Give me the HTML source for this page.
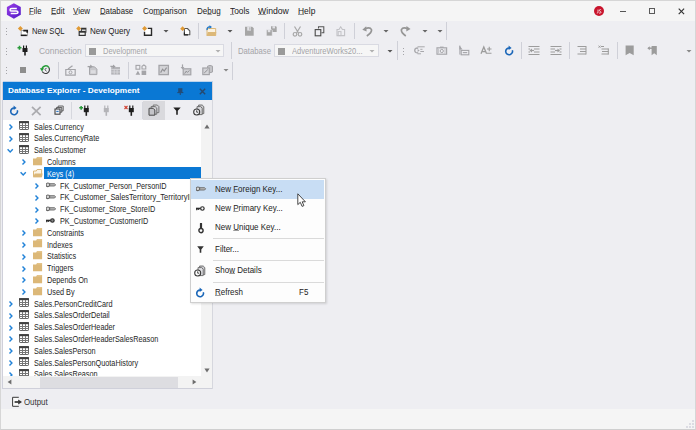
<!DOCTYPE html><html><head><meta charset="utf-8"><style>
*{margin:0;padding:0;box-sizing:border-box}
html,body{width:696px;height:430px;overflow:hidden;background:#eeeef2;font-family:"Liberation Sans",sans-serif;font-size:8px;color:#1e1e1e;position:relative}
.a{position:absolute}
.t{position:absolute;white-space:nowrap;line-height:10px}
u{text-decoration:underline;text-decoration-color:#9a9a9a;text-underline-offset:0px}
</style></head><body>
<div class="a" style="left:0;top:0;width:696px;height:430px;border:1px solid #d6d6d6;border-bottom-color:#cfcfcf"></div>
<div class="a" style="left:1px;top:1px;width:694px;height:20px;background:#f5f5f5"></div>
<svg class="a" style="left:6px;top:3px" width="16" height="16" viewBox="0 0 16 16"><defs><linearGradient id="lg" x1="0" y1="0" x2="1" y2="1"><stop offset="0" stop-color="#9a3de6"/><stop offset="1" stop-color="#4f1ac8"/></linearGradient></defs><polygon points="7.85,0.2 14.8,4.1 14.8,11.8 7.85,15.7 0.9,11.8 0.9,4.1" fill="url(#lg)"/><path d="M10.8,5.5 H5.8 Q4,5.5 4,6.9 Q4,8.1 5.8,8.1 H10.2 Q12,8.1 12,9.3 Q12,10.4 10.2,10.4 H4.7" stroke="#fff" stroke-width="1.5" fill="none"/></svg>
<div class="t" style="left:29.3px;top:6.98px;font-size:8.2px;line-height:9.159px;transform:scaleX(0.95);transform-origin:0 0;color:#222"><u>F</u>ile</div>
<div class="t" style="left:51.3px;top:6.98px;font-size:8.2px;line-height:9.159px;transform:scaleX(0.97);transform-origin:0 0;color:#222"><u>E</u>dit</div>
<div class="t" style="left:73.3px;top:6.98px;font-size:8.2px;line-height:9.159px;transform:scaleX(0.97);transform-origin:0 0;color:#222"><u>V</u>iew</div>
<div class="t" style="left:100.3px;top:6.98px;font-size:8.2px;line-height:9.159px;transform:scaleX(0.945);transform-origin:0 0;color:#222"><u>D</u>atabase</div>
<div class="t" style="left:143.3px;top:6.98px;font-size:8.2px;line-height:9.159px;transform:scaleX(0.99);transform-origin:0 0;color:#222">Co<u>m</u>parison</div>
<div class="t" style="left:197.3px;top:6.98px;font-size:8.2px;line-height:9.159px;transform:scaleX(0.98);transform-origin:0 0;color:#222">De<u>b</u>ug</div>
<div class="t" style="left:230.3px;top:6.98px;font-size:8.2px;line-height:9.159px;transform:scaleX(1.02);transform-origin:0 0;color:#222"><u>T</u>ools</div>
<div class="t" style="left:258.3px;top:6.98px;font-size:8.2px;line-height:9.159px;transform:scaleX(1.06);transform-origin:0 0;color:#222"><u>W</u>indow</div>
<div class="t" style="left:298.3px;top:6.98px;font-size:8.2px;line-height:9.159px;transform:scaleX(1.03);transform-origin:0 0;color:#222"><u>H</u>elp</div>
<div class="a" style="left:593.6px;top:5.9px;width:10.4px;height:10.4px;border-radius:50%;background:#c9142c"></div>
<svg class="a" style="left:596px;top:8.6px" width="6" height="5" viewBox="0 0 6 5"><path d="M2,0.5 V3.3 Q2,4.3 0.8,4.1 M5.2,0.9 Q4.6,0.4 3.8,0.6 Q3,0.9 3.4,1.8 Q4,2.3 4.7,2.7 Q5.3,3.4 4.6,4 Q3.8,4.4 3,3.9" stroke="#fff" stroke-width="0.75" fill="none"/></svg>
<div class="a" style="left:620px;top:11px;width:6px;height:1px;background:#555"></div>
<div class="a" style="left:649.3px;top:8.2px;width:6px;height:6px;border:1px solid #5a5a5a"></div>
<svg class="a" style="left:678px;top:8px" width="7" height="7" viewBox="0 0 7 7"><path d="M0.7,0.7 L6.1,6.1 M6.1,0.7 L0.7,6.1" stroke="#333" stroke-width="1.15"/></svg>
<div class="a" style="left:1px;top:21px;width:694px;height:61px;background:#eeeef2"></div>
<div class="a" style="left:6px;top:28px;width:1px;height:1px;background:#a4a4a8"></div><div class="a" style="left:6px;top:31px;width:1px;height:1px;background:#a4a4a8"></div><div class="a" style="left:6px;top:34px;width:1px;height:1px;background:#a4a4a8"></div>
<svg class="a" style="left:15px;top:24px" width="14" height="14" viewBox="0 0 14 14"><rect x="6.2" y="6.4" width="6.3" height="5.3" fill="#fff" stroke="#9a9a9a" stroke-width="0.9"/><path d="M5.8,11.3 H11.8" stroke="#1e1e1e" stroke-width="1.5"/><path d="M8.3,6.6 H12.2 V8.8" stroke="#1e1e1e" stroke-width="1.7" fill="none"/><polygon points="5.4,2.0999999999999996 7.9,4.6 5.4,7.1 2.9000000000000004,4.6" fill="#e09a35"/></svg>
<div class="t" style="left:31.6px;top:26.68px;font-size:8.2px;line-height:9.159px;transform:scaleX(0.93);transform-origin:0 0;color:#222">New SQL</div>
<svg class="a" style="left:74px;top:24px" width="14" height="14" viewBox="0 0 14 14"><rect x="7.5" y="4.2" width="4.5" height="4" fill="#fff" stroke="#555" stroke-width="1"/><rect x="7.5" y="4" width="4.5" height="1.6" fill="#333"/><rect x="5.2" y="7.4" width="6" height="4" fill="#f3f3f3" stroke="#333" stroke-width="1.2"/><rect x="5.2" y="7.2" width="6" height="1.5" fill="#333"/><polygon points="4.7,2.0999999999999996 7.2,4.6 4.7,7.1 2.2,4.6" fill="#e09a35"/></svg>
<div class="t" style="left:90.1px;top:26.68px;font-size:8.2px;line-height:9.159px;transform:scaleX(0.98);transform-origin:0 0;color:#222">New Query</div>
<svg class="a" style="left:140px;top:23px" width="16" height="16" viewBox="0 0 16 16"><rect x="4.5" y="5.4" width="7" height="6.8" fill="#fff"/><path d="M7.8,5.4 H11.5 V12.2 H4.5 V8.8" fill="none" stroke="#2a2a2a" stroke-width="1.4"/><polygon points="4.6,3.0999999999999996 7.1,5.6 4.6,8.1 2.0999999999999996,5.6" fill="#e09a35"/></svg>
<svg class="a" style="left:163px;top:29px" width="6" height="4" viewBox="0 0 6 4"><polygon points="0.5,1 5.5,1 3,3.6" fill="#555"/></svg>
<svg class="a" style="left:176px;top:23px" width="16" height="16" viewBox="0 0 16 16"><path d="M8.4,5.5 H11.4 L13.8,7.9 V11.8 H8.4 Z" fill="#fff" stroke="#555" stroke-width="1.1" stroke-linejoin="round"/><path d="M8.4,9.5 V11.8 H12" stroke="#222" stroke-width="1.2" fill="none"/><polygon points="6.6,3.3000000000000003 9.0,5.7 6.6,8.1 4.199999999999999,5.7" fill="#e09a35"/></svg>
<div class="a" style="left:198px;top:23px;width:1px;height:16px;background:#cfd0d8"></div>
<svg class="a" style="left:204px;top:24px" width="14" height="14" viewBox="0 0 14 14"><path d="M3,4.5 H11.7 V11.5 H3 Z" fill="#fbf2e0" stroke="#dcb878" stroke-width="1"/><path d="M2.5,12 L3.8,8 H12.3 L11.5,12 Z" fill="#dcb878"/><path d="M3.2,6 A2.3,2.3 0 0 1 6,3" stroke="#1b74c8" stroke-width="1.4" fill="none"/><polygon points="5.5,1.2 8,3 5.5,4.8" fill="#1b74c8"/></svg>
<svg class="a" style="left:227px;top:29px" width="6" height="4" viewBox="0 0 6 4"><polygon points="0.5,1 5.5,1 3,3.6" fill="#555"/></svg>
<svg class="a" style="left:244px;top:26px" width="10" height="10" viewBox="0 0 10 10"><path d="M1,0.7 H8.2 L9.7,2.2 V9.7 H1 Z" fill="#a6a6a6"/><rect x="3.2" y="0.7" width="3.8" height="3.9" fill="#e2e2e6"/><rect x="5.4" y="1.3" width="1" height="2.5" fill="#a6a6a6"/></svg>
<svg class="a" style="left:266px;top:26px" width="11" height="11" viewBox="0 0 11 11"><path d="M5,0.2 H10 L10.7,0.9 V5.9 H5 Z" fill="#a6a6a6"/><rect x="6.5" y="0.2" width="2.5" height="2.2" fill="#e2e2e6"/><path d="M0.3,3.7 H5.5 L6.3,4.5 V10 H0.3 Z" fill="#a6a6a6" stroke="#eeeef2" stroke-width="0.7"/><rect x="1.8" y="4" width="2.5" height="2.2" fill="#e2e2e6"/></svg>
<div class="a" style="left:284px;top:23px;width:1px;height:16px;background:#cfd0d8"></div>
<svg class="a" style="left:292px;top:26px" width="11" height="11" viewBox="0 0 11 11"><path d="M2.5,0.5 L6.5,7 M8.5,0.5 L4.5,7" stroke="#a8a8a8" stroke-width="1.2" fill="none"/><circle cx="3" cy="8.3" r="1.8" fill="none" stroke="#a8a8a8" stroke-width="1.2"/><circle cx="8" cy="8.3" r="1.8" fill="none" stroke="#a8a8a8" stroke-width="1.2"/></svg>
<svg class="a" style="left:314px;top:26px" width="11" height="11" viewBox="0 0 11 11"><path d="M4.5,2.5 V0.7 H9.8 V6.8 H7.5" fill="none" stroke="#555" stroke-width="1.05"/><rect x="1.2" y="3.6" width="5.6" height="6.2" fill="#eeeef2" stroke="#4a4a4a" stroke-width="1.1"/></svg>
<svg class="a" style="left:336px;top:26px" width="10" height="11" viewBox="0 0 10 11"><path d="M1,3.5 H3 L4.7,0.8 L6.4,3.5 H8.6 V9.6 H1 Z" fill="none" stroke="#c2c2c6" stroke-width="1.1"/><rect x="2.2" y="5.6" width="2.8" height="4" fill="none" stroke="#c2c2c6" stroke-width="1"/></svg>
<div class="a" style="left:354px;top:23px;width:1px;height:16px;background:#cfd0d8"></div>
<svg class="a" style="left:361px;top:25px" width="12" height="12" viewBox="0 0 12 12"><polygon points="1.3,4.8 5.2,1.3 5.6,6.4" fill="#959595"/><path d="M4,3.8 Q9,1.6 10.4,4.5 Q11.3,7.5 5.8,11" stroke="#959595" stroke-width="1.7" fill="none"/></svg>
<svg class="a" style="left:383px;top:29px" width="6" height="4" viewBox="0 0 6 4"><polygon points="0.5,1 5.5,1 3,3.6" fill="#666"/></svg>
<svg class="a" style="left:400px;top:25px" width="12" height="12" viewBox="0 0 12 12"><polygon points="10.5,4 6.5,1 6.3,6.5" fill="#959595"/><path d="M7.8,3.6 Q2.8,1.6 1.5,4.5 Q0.7,7.5 5.8,11" stroke="#959595" stroke-width="1.7" fill="none"/></svg>
<svg class="a" style="left:421.5px;top:29px" width="6" height="4" viewBox="0 0 6 4"><polygon points="0.5,1 5.5,1 3,3.6" fill="#666"/></svg>
<svg class="a" style="left:436.5px;top:29px" width="6" height="4" viewBox="0 0 6 4"><polygon points="0.5,1 5.5,1 3,3.6" fill="#666"/></svg>
<div class="a" style="left:446px;top:22px;width:1px;height:18px;background:#cfd0d8"></div>
<div class="a" style="left:6px;top:48px;width:1px;height:1px;background:#a4a4a8"></div><div class="a" style="left:6px;top:51px;width:1px;height:1px;background:#a4a4a8"></div><div class="a" style="left:6px;top:54px;width:1px;height:1px;background:#a4a4a8"></div>
<svg class="a" style="left:17px;top:45px" width="12" height="11" viewBox="0 0 12 11"><path d="M0.5,2.8 H4.5 M2.5,0.8 V4.8" stroke="#2a9a3a" stroke-width="1.6"/><rect x="5.5" y="3" width="5" height="4" fill="#1e1e1e"/><rect x="6" y="0.5" width="1.2" height="3" fill="#1e1e1e"/><rect x="8.8" y="0.5" width="1.2" height="3" fill="#1e1e1e"/><rect x="7.2" y="6.5" width="1.6" height="4" fill="#1e1e1e"/></svg>
<div class="t" style="left:39px;top:46.88px;font-size:8.2px;line-height:9.159px;transform:scaleX(1.03);transform-origin:0 0;color:#a4a4a8">Connection</div>
<div class="a" style="left:85px;top:44px;width:139px;height:13px;background:#f6f6f6;border:1px solid #d9dae2"></div>
<div class="a" style="left:89px;top:47.5px;width:7px;height:7px;background:#9a9a9a"></div>
<div class="t" style="left:102.6px;top:46.88px;font-size:8.2px;line-height:9.159px;transform:scaleX(0.91);transform-origin:0 0;color:#a4a4a8">Development</div>
<svg class="a" style="left:215px;top:49px" width="6" height="4" viewBox="0 0 6 4"><polygon points="0.5,1 5.5,1 3,3.6" fill="#b0b0b0"/></svg>
<div class="a" style="left:231px;top:42px;width:1px;height:17px;background:#cfd0d8"></div>
<div class="t" style="left:237.6px;top:46.88px;font-size:8.2px;line-height:9.159px;transform:scaleX(0.94);transform-origin:0 0;color:#a4a4a8">Database</div>
<div class="a" style="left:274px;top:44px;width:104.5px;height:13px;background:#f6f6f6;border:1px solid #d9dae2"></div>
<div class="a" style="left:278px;top:47.5px;width:7px;height:7px;background:#9a9a9a"></div>
<div class="t" style="left:291.5px;top:46.88px;font-size:8.2px;line-height:9.159px;transform:scaleX(0.925);transform-origin:0 0;color:#a4a4a8">AdventureWorks20...</div>
<svg class="a" style="left:369px;top:49px" width="6" height="4" viewBox="0 0 6 4"><polygon points="0.5,1 5.5,1 3,3.6" fill="#b0b0b0"/></svg>
<svg class="a" style="left:387px;top:49px" width="6" height="4" viewBox="0 0 6 4"><polygon points="0.5,1 5.5,1 3,3.6" fill="#555"/></svg>
<div class="a" style="left:397px;top:41px;width:1px;height:19px;background:#cfd0d8"></div>
<div class="a" style="left:403px;top:48px;width:1px;height:1px;background:#a4a4a8"></div><div class="a" style="left:403px;top:51px;width:1px;height:1px;background:#a4a4a8"></div><div class="a" style="left:403px;top:54px;width:1px;height:1px;background:#a4a4a8"></div>
<svg class="a" style="left:413px;top:45px" width="12" height="11" viewBox="0 0 12 11"><path d="M4.5,1.8 H11.7 M7.3,4.3 H9.5 M7.3,6.5 H11 M4.5,8.8 H8" stroke="#a8a8ac" stroke-width="1"/><path d="M5.2,3.3 A2.4,2.4 0 1 0 5.2,7.6" stroke="#a8a8ac" stroke-width="1.4" fill="none"/><polygon points="6.6,5.5 4.6,4 4.6,7" fill="#a8a8ac"/></svg>
<svg class="a" style="left:436px;top:45px" width="12" height="11" viewBox="0 0 12 11"><rect x="1" y="2.8" width="9.6" height="6.4" fill="none" stroke="#a8a8ac" stroke-width="1.2"/><path d="M2.6,3.5 V8.5 M9,3.5 V8.5" stroke="#b8b8bc" stroke-width="0.8"/><rect x="4" y="1.6" width="3.6" height="1.4" fill="#a8a8ac"/><circle cx="5.8" cy="6" r="1.6" fill="none" stroke="#a8a8ac" stroke-width="1"/></svg>
<svg class="a" style="left:459px;top:45px" width="11" height="11" viewBox="0 0 11 11"><polygon points="0.4,0.6 3.6,4.6 0.4,4.6" fill="#a4a4a8"/><path d="M0.9,0.6 V9.6" stroke="#a4a4a8" stroke-width="1"/><rect x="2.2" y="5.4" width="7.6" height="4.4" fill="none" stroke="#a4a4a8" stroke-width="1.1"/><path d="M3.8,7.6 H8.2" stroke="#a4a4a8" stroke-width="1.1"/></svg>
<svg class="a" style="left:480px;top:45px" width="13" height="11" viewBox="0 0 13 11"><path d="M1,8.8 L3.8,2 L6.6,8.8 M2.1,6.6 H5.5" stroke="#9c9c9c" stroke-width="1.3" fill="none"/><path d="M7,4 H11.5 M9.25,1.8 V6.2 M7,8.3 H11.5" stroke="#9c9c9c" stroke-width="1.1"/></svg>
<svg class="a" style="left:504px;top:45px" width="10" height="11" viewBox="0 0 10 11"><path d="M5.2,3 A3.4,3.4 0 1 0 8.3,5.2" stroke="#1a66b8" stroke-width="1.6" fill="none"/><polygon points="4.6,0.6 7.6,2.9 4.6,5.1" fill="#1a66b8"/></svg>
<div class="a" style="left:521px;top:42px;width:1px;height:17px;background:#cfd0d8"></div>
<svg class="a" style="left:528px;top:45px" width="12" height="11" viewBox="0 0 12 11"><path d="M0.5,1.5 H11.5 M0.5,9.5 H11.5 M6,4 H11.5 M6,7 H11.5 M0.5,4 H2 M0.5,7 H2" stroke="#9c9c9c" stroke-width="1.1"/><path d="M6,5.5 H2.5" stroke="#9c9c9c" stroke-width="1.2"/><polygon points="1.5,5.5 4,3.5 4,7.5" fill="#9c9c9c"/></svg>
<svg class="a" style="left:550px;top:45px" width="12" height="11" viewBox="0 0 12 11"><path d="M0.5,1.5 H11.5 M0.5,9.5 H11.5 M0.5,4 H5 M0.5,7 H5 M9.5,4 H11.5 M9.5,7 H11.5" stroke="#9c9c9c" stroke-width="1.1"/><path d="M5,5.5 H8.5" stroke="#9c9c9c" stroke-width="1.2"/><polygon points="10,5.5 7.5,3.5 7.5,7.5" fill="#9c9c9c"/></svg>
<div class="a" style="left:569px;top:42px;width:1px;height:17px;background:#cfd0d8"></div>
<svg class="a" style="left:577px;top:45px" width="10" height="11" viewBox="0 0 10 11"><path d="M0.5,1.5 H9 M3,4 H9 M3,6.5 H9 M0.5,9 H9" stroke="#9c9c9c" stroke-width="1.1"/><path d="M9,1 V9.5" stroke="#9c9c9c" stroke-width="1"/></svg>
<svg class="a" style="left:598px;top:45px" width="11" height="11" viewBox="0 0 11 11"><path d="M3.5,4 H10.5 M4,6.5 H10.5 M3.5,9 H10.5" stroke="#9c9c9c" stroke-width="1.1"/><path d="M10.3,3.5 V9.5" stroke="#9c9c9c" stroke-width="1"/><path d="M0.5,2.5 L2.5,0.8 M0.5,0.8 L2.5,2.5 M3,1.5 H6" stroke="#9c9c9c" stroke-width="1"/></svg>
<div class="a" style="left:617px;top:42px;width:1px;height:17px;background:#cfd0d8"></div>
<svg class="a" style="left:625px;top:45px" width="9" height="11" viewBox="0 0 9 11"><path d="M0.6,0.6 H8.7 V10.3 L4.65,8.1 L0.6,10.3 Z" fill="#9c9c9c"/></svg>
<svg class="a" style="left:647px;top:45px" width="11" height="11" viewBox="0 0 11 11"><path d="M4.6,1 H9.8 V10.2 L7.2,8.3 L4.6,10.2 Z" fill="#9c9c9c"/><path d="M1.2,3.2 H5.4" stroke="#9c9c9c" stroke-width="1.4"/><polygon points="0.3,3.2 2.8,1.2 2.8,5.2" fill="#9c9c9c"/></svg>
<svg class="a" style="left:685.5px;top:49px" width="6" height="4" viewBox="0 0 6 4"><polygon points="0.5,1 5.5,1 3,3.6" fill="#888"/></svg>
<div class="a" style="left:6px;top:67px;width:1px;height:1px;background:#a4a4a8"></div><div class="a" style="left:6px;top:70px;width:1px;height:1px;background:#a4a4a8"></div><div class="a" style="left:6px;top:73px;width:1px;height:1px;background:#a4a4a8"></div>
<div class="a" style="left:20px;top:67px;width:6px;height:6px;background:#8e8e8e"></div>
<svg class="a" style="left:39px;top:64px" width="12" height="12" viewBox="0 0 12 12"><path d="M9.9,3.6 A3.7,3.7 0 1 1 3.2,7.5" stroke="#3a3a3a" stroke-width="1.15" fill="none"/><path d="M3.1,5 A3.7,3.7 0 0 1 9.9,3.6" stroke="#229a35" stroke-width="1.5" fill="none"/><polygon points="0.9,4.2 5,4.2 3,7.6" fill="#229a35"/><path d="M7.5,3.9 L5.9,5.6 L7.5,7.2" stroke="#444" stroke-width="1" fill="none"/></svg>
<div class="a" style="left:58px;top:62px;width:1px;height:17px;background:#cfd0d8"></div>
<svg class="a" style="left:65px;top:65px" width="11" height="11" viewBox="0 0 11 11"><path d="M0.8,4.5 H10.2 V10.2 H0.8 Z" fill="none" stroke="#a4a4a8" stroke-width="1.2"/><path d="M3,4 L7.5,0.8" stroke="#a4a4a8" stroke-width="1.3"/><circle cx="5.5" cy="7.3" r="1.5" fill="none" stroke="#a4a4a8" stroke-width="1"/></svg>
<svg class="a" style="left:87px;top:64px" width="12" height="12" viewBox="0 0 12 12"><path d="M2.5,2.8 H7.5 L9.9,5.2 V10.6 H2.5 Z" fill="#c8c8cc" stroke="#a6a6aa" stroke-width="1"/><rect x="3.8" y="6.2" width="4.8" height="3.2" fill="#dcdce0"/><path d="M0.6,2.6 H3.6" stroke="#a0a0a4" stroke-width="1.3"/><polygon points="3.2,0.6 5.8,2.6 3.2,4.6" fill="#a0a0a4"/></svg>
<svg class="a" style="left:110px;top:64px" width="12" height="12" viewBox="0 0 12 12"><rect x="1.2" y="3" width="8.8" height="7.6" fill="#b4b4b8"/><path d="M1.2,5.6 H10 M1.2,8 H10 M4.2,5.6 V10.6 M7.1,5.6 V10.6" stroke="#dcdce0" stroke-width="0.8"/><path d="M0.4,2.4 H3.4" stroke="#a0a0a4" stroke-width="1.3"/><polygon points="3,0.4 5.6,2.4 3,4.4" fill="#a0a0a4"/></svg>
<div class="a" style="left:128px;top:62px;width:1px;height:17px;background:#cfd0d8"></div>
<svg class="a" style="left:135px;top:64px" width="12" height="12" viewBox="0 0 12 12"><rect x="1" y="1.4" width="3.8" height="3.8" fill="none" stroke="#a4a4a8" stroke-width="1.1"/><path d="M7,5 V2.4 L8.9,1 L10.8,2.4 V5 Z" fill="none" stroke="#a4a4a8" stroke-width="1.1"/><polygon points="0.6,10.8 2.9,6.8 5.2,10.8" fill="#a4a4a8"/><rect x="6.6" y="6.6" width="4.6" height="4.4" fill="#a4a4a8"/></svg>
<svg class="a" style="left:157.5px;top:64px" width="12" height="12" viewBox="0 0 12 12"><rect x="1" y="1.4" width="9.4" height="9.2" fill="#d4d4d8" stroke="#a4a4a8" stroke-width="1.3"/><path d="M2.6,8.6 L4.6,5.2 L6.2,7 L8.6,3.6" stroke="#909094" stroke-width="1.1" fill="none"/></svg>
<svg class="a" style="left:180px;top:64px" width="12" height="12" viewBox="0 0 12 12"><rect x="3.2" y="4.8" width="7.6" height="6" fill="#d0d0d4" stroke="#a4a4a8" stroke-width="1.2"/><path d="M4.6,9.6 L6.2,7.2 L7.4,8.4 L9.4,6.4" stroke="#909094" stroke-width="1" fill="none"/><path d="M2.5,0.4 V4.2" stroke="#a4a4a8" stroke-width="1.2"/><polygon points="0.6,3 4.4,3 2.5,5.6" fill="#a4a4a8"/></svg>
<svg class="a" style="left:202px;top:64px" width="12" height="12" viewBox="0 0 12 12"><path d="M5.5,2.2 Q8,0.6 10.5,2.2 V8 Q8,9.4 5.5,8 Z" fill="#c4c4c8" stroke="#a4a4a8" stroke-width="1"/><rect x="0.8" y="4" width="6.5" height="6.6" fill="#d4d4d8" stroke="#a4a4a8" stroke-width="1.2"/><path d="M2.2,9 L5.8,5.6" stroke="#909094" stroke-width="1"/></svg>
<svg class="a" style="left:222.5px;top:68px" width="6" height="4" viewBox="0 0 6 4"><polygon points="0.5,1 5.5,1 3,3.6" fill="#888"/></svg>
<div class="a" style="left:232px;top:62px;width:1px;height:18px;background:#cfd0d8"></div>
<div class="a" style="left:2px;top:82px;width:211px;height:307px;background:#fff;border:1px solid #cfd0da;border-top:none"></div>
<div class="a" style="left:3px;top:81px;width:209.5px;height:1px;background:rgba(10,120,212,0.22)"></div>
<div class="a" style="left:3px;top:82px;width:209px;height:18px;background:#0a78d4"></div>
<div class="t" style="left:8.1px;top:87.45px;font-size:7.9px;line-height:8.824px;transform:scaleX(1.045);transform-origin:0 0;color:#fff;font-weight:bold">Database Explorer - Development</div>
<svg class="a" style="left:177.3px;top:88px" width="7" height="8" viewBox="0 0 7 8"><rect x="1.2" y="0.2" width="4.2" height="4.3" fill="#234c78"/><rect x="0.3" y="4" width="6" height="1.1" fill="#234c78"/><path d="M3.3,5 V7" stroke="#234c78" stroke-width="1.1"/></svg>
<svg class="a" style="left:198.8px;top:88px" width="7" height="7" viewBox="0 0 7 7"><path d="M0.8,0.8 L6.2,6.2 M6.2,0.8 L0.8,6.2" stroke="#27486e" stroke-width="1.4"/></svg>
<div class="a" style="left:3px;top:100px;width:209px;height:20px;background:#eeeef2"></div>
<svg class="a" style="left:9px;top:105px" width="10" height="11" viewBox="0 0 10 11"><path d="M5.2,3 A3.4,3.4 0 1 0 8.3,5.2" stroke="#1a66b8" stroke-width="1.6" fill="none"/><polygon points="4.6,0.6 7.6,2.9 4.6,5.1" fill="#1a66b8"/></svg>
<svg class="a" style="left:30.5px;top:105.7px" width="11" height="10" viewBox="0 0 11 10"><path d="M1,0.8 L9.6,9.2 M9.6,0.8 L1,9.2" stroke="#ababaf" stroke-width="1.7"/></svg>
<svg class="a" style="left:54px;top:105px" width="10" height="10" viewBox="0 0 10 10"><path d="M4.2,2.6 V1 H9.2 V5.8 H7.4" fill="none" stroke="#666" stroke-width="1"/><path d="M2.6,4.5 V2.4 H7.8 V7.2 H6.2" fill="#eeeef2" stroke="#555" stroke-width="1"/><rect x="1" y="4" width="5" height="5.2" fill="#eeeef2" stroke="#444" stroke-width="1.1"/><path d="M2.3,6.4 H4.6" stroke="#1c6fc4" stroke-width="1"/></svg>
<div class="a" style="left:71px;top:102px;width:1px;height:17px;background:#d6d7de"></div>
<svg class="a" style="left:79px;top:105px" width="11" height="11" viewBox="0 0 11 11"><path d="M0.3,2.8 H4 M2.15,0.9 V4.7" stroke="#2a9a3a" stroke-width="1.5"/><rect x="4.8" y="3" width="5" height="4.2" fill="#1e1e1e"/><rect x="5.2" y="0.5" width="1.2" height="3" fill="#1e1e1e"/><rect x="8.2" y="0.5" width="1.2" height="3" fill="#1e1e1e"/><rect x="6.5" y="6.8" width="1.6" height="4" fill="#1e1e1e"/></svg>
<svg class="a" style="left:99px;top:105px" width="11" height="11" viewBox="0 0 11 11"><rect x="4.8" y="3" width="5" height="4.2" fill="#b4b4b8"/><rect x="5.2" y="0.5" width="1.2" height="3" fill="#b4b4b8"/><rect x="8.2" y="0.5" width="1.2" height="3" fill="#b4b4b8"/><rect x="6.5" y="6.8" width="1.6" height="4" fill="#b4b4b8"/></svg>
<svg class="a" style="left:123.5px;top:105px" width="11" height="11" viewBox="0 0 11 11"><path d="M0.5,1 L3.5,4 M3.5,1 L0.5,4" stroke="#d04030" stroke-width="1.1"/><rect x="4.8" y="3" width="5" height="4.2" fill="#1e1e1e"/><rect x="5.2" y="0.5" width="1.2" height="3" fill="#1e1e1e"/><rect x="8.2" y="0.5" width="1.2" height="3" fill="#1e1e1e"/><rect x="6.5" y="6.8" width="1.6" height="4" fill="#1e1e1e"/></svg>
<div class="a" style="left:142px;top:102px;width:1px;height:17px;background:#d6d7de"></div>
<div class="a" style="left:143px;top:100.5px;width:22.3px;height:19px;background:#d9d9dd"></div>
<svg class="a" style="left:148px;top:104px" width="12" height="12" viewBox="0 0 12 12"><path d="M5.2,1 H9.3 L10.9,2.6 V8.6 H5.2 Z" fill="#d2d2d6" stroke="#707070" stroke-width="0.9"/><path d="M3.1,2.6 H7.2 L8.8,4.2 V10.2 H3.1 Z" fill="#d2d2d6" stroke="#666" stroke-width="0.9"/><path d="M1,4.3 H5.1 L6.8,6 V11.2 H1 Z" fill="#c4c4c8" stroke="#4a4a4a" stroke-width="1"/></svg>
<svg class="a" style="left:172.5px;top:106.5px" width="8" height="8" viewBox="0 0 8 8"><path d="M0.3,0.5 H7.7 L4.8,3.8 V7.8 H3.2 V3.8 Z" fill="#222"/></svg>
<svg class="a" style="left:193px;top:104px" width="12" height="12" viewBox="0 0 12 12"><path d="M5.6,1 H9.2 L10.8,2.6 V9.6 H5.6 Z" fill="#c8c8cc" stroke="#666" stroke-width="0.9"/><path d="M4,2.6 H7.6 L9.2,4.2 V10.6 H4 Z" fill="#d8d8dc" stroke="#666" stroke-width="0.9"/><circle cx="3.7" cy="8" r="3" fill="#eeeef2" stroke="#3a3a3a" stroke-width="1.1"/><path d="M3.7,6.3 V8.2 H5.2" stroke="#333" stroke-width="0.9" fill="none"/></svg>
<div class="a" style="left:212px;top:100px;width:1px;height:289px;background:#d6d7de"></div>
<div class="a" style="left:3px;top:120px;width:198px;height:256px;overflow:hidden;background:#fff" id="tree">
<svg class="a" style="left:4.5px;top:3.9px" width="6" height="6" viewBox="0 0 6 6"><path d="M1.5,0.6 L3.9,3 L1.5,5.4" stroke="#2283d8" stroke-width="1.45" fill="none"/></svg>
<svg class="a" style="left:16px;top:1px" width="10" height="9" viewBox="0 0 10 9"><rect x="0.5" y="0.5" width="9" height="8" rx="0.6" fill="#fff" stroke="#666" stroke-width="1"/><rect x="0" y="0.2" width="10" height="2" fill="#404040"/><path d="M0.5,4.5 H9.5 M0.5,6.5 H9.5 M3.5,2 V8.5 M6.5,2 V8.5" stroke="#777" stroke-width="1"/></svg>
<div class="t" style="left:30.8px;top:2.68px;font-size:8.2px;line-height:9.159px;transform:scaleX(0.89);transform-origin:0 0;color:#1e1e1e">Sales.Currency</div>
<svg class="a" style="left:4.5px;top:15.7px" width="6" height="6" viewBox="0 0 6 6"><path d="M1.5,0.6 L3.9,3 L1.5,5.4" stroke="#2283d8" stroke-width="1.45" fill="none"/></svg>
<svg class="a" style="left:16px;top:13px" width="10" height="9" viewBox="0 0 10 9"><rect x="0.5" y="0.5" width="9" height="8" rx="0.6" fill="#fff" stroke="#666" stroke-width="1"/><rect x="0" y="0.2" width="10" height="2" fill="#404040"/><path d="M0.5,4.5 H9.5 M0.5,6.5 H9.5 M3.5,2 V8.5 M6.5,2 V8.5" stroke="#777" stroke-width="1"/></svg>
<div class="t" style="left:30.8px;top:14.48px;font-size:8.2px;line-height:9.159px;transform:scaleX(0.89);transform-origin:0 0;color:#1e1e1e">Sales.CurrencyRate</div>
<svg class="a" style="left:3.9px;top:27.5px" width="7" height="6" viewBox="0 0 7 6"><path d="M0.6,1.3 L3.2,3.9 L5.8,1.3" stroke="#2283d8" stroke-width="1.45" fill="none"/></svg>
<svg class="a" style="left:16px;top:25px" width="10" height="9" viewBox="0 0 10 9"><rect x="0.5" y="0.5" width="9" height="8" rx="0.6" fill="#fff" stroke="#666" stroke-width="1"/><rect x="0" y="0.2" width="10" height="2" fill="#404040"/><path d="M0.5,4.5 H9.5 M0.5,6.5 H9.5 M3.5,2 V8.5 M6.5,2 V8.5" stroke="#777" stroke-width="1"/></svg>
<div class="t" style="left:30.8px;top:26.28px;font-size:8.2px;line-height:9.159px;transform:scaleX(0.89);transform-origin:0 0;color:#1e1e1e">Sales.Customer</div>
<svg class="a" style="left:17.8px;top:39.3px" width="6" height="6" viewBox="0 0 6 6"><path d="M1.5,0.6 L3.9,3 L1.5,5.4" stroke="#2283d8" stroke-width="1.45" fill="none"/></svg>
<svg class="a" style="left:29.6px;top:36.7px" width="10" height="9" viewBox="0 0 10 9"><path d="M0,1.6 H3.2 L4,0 H9.1 V8.2 H0 Z" fill="#dcb878"/><rect x="4.2" y="0.2" width="4.7" height="1.2" fill="#e6c890"/></svg>
<div class="t" style="left:44.1px;top:38.08px;font-size:8.2px;line-height:9.159px;transform:scaleX(0.89);transform-origin:0 0;color:#1e1e1e">Columns</div>
<div class="a" style="left:41.2px;top:47.20px;width:156.5px;height:11.8px;background:#0a78d4"></div>
<svg class="a" style="left:17.2px;top:51.1px" width="7" height="6" viewBox="0 0 7 6"><path d="M0.6,1.3 L3.2,3.9 L5.8,1.3" stroke="#2283d8" stroke-width="1.45" fill="none"/></svg>
<svg class="a" style="left:29.6px;top:48.5px" width="10" height="9" viewBox="0 0 10 9"><path d="M0.5,2 H3.3 L4.1,0.5 H8.6 V7.7 H0.5 Z" fill="#fbf4e6" stroke="#dcb878" stroke-width="1"/><path d="M0,8.2 L1.8,4.4 H9.6 L8.9,8.2 Z" fill="#dcb878"/></svg>
<div class="t" style="left:44.1px;top:49.88px;font-size:8.2px;line-height:9.159px;transform:scaleX(0.89);transform-origin:0 0;color:#fff">Keys (4)</div>
<svg class="a" style="left:31.1px;top:62.9px" width="6" height="6" viewBox="0 0 6 6"><path d="M1.5,0.6 L3.9,3 L1.5,5.4" stroke="#2283d8" stroke-width="1.45" fill="none"/></svg>
<svg class="a" style="left:42.9px;top:62.3px" width="10" height="6" viewBox="0 0 10 6"><path d="M3.6,1.7 H8.6 L9.6,2.85 L8.6,4 H3.6 Z" fill="#b8b8b8" stroke="#6a6a6a" stroke-width="0.9"/><circle cx="1.9" cy="2.85" r="1.8" fill="#d8d8d8" stroke="#666" stroke-width="1.1"/></svg>
<div class="t" style="left:57.4px;top:61.68px;font-size:8.2px;line-height:9.159px;transform:scaleX(0.89);transform-origin:0 0;color:#1e1e1e">FK_Customer_Person_PersonID</div>
<svg class="a" style="left:31.1px;top:74.7px" width="6" height="6" viewBox="0 0 6 6"><path d="M1.5,0.6 L3.9,3 L1.5,5.4" stroke="#2283d8" stroke-width="1.45" fill="none"/></svg>
<svg class="a" style="left:42.9px;top:74.1px" width="10" height="6" viewBox="0 0 10 6"><path d="M3.6,1.7 H8.6 L9.6,2.85 L8.6,4 H3.6 Z" fill="#b8b8b8" stroke="#6a6a6a" stroke-width="0.9"/><circle cx="1.9" cy="2.85" r="1.8" fill="#d8d8d8" stroke="#666" stroke-width="1.1"/></svg>
<div class="t" style="left:57.4px;top:73.48px;font-size:8.2px;line-height:9.159px;transform:scaleX(0.915);transform-origin:0 0;color:#1e1e1e">FK_Customer_SalesTerritory_TerritoryID</div>
<svg class="a" style="left:31.1px;top:86.5px" width="6" height="6" viewBox="0 0 6 6"><path d="M1.5,0.6 L3.9,3 L1.5,5.4" stroke="#2283d8" stroke-width="1.45" fill="none"/></svg>
<svg class="a" style="left:42.9px;top:85.9px" width="10" height="6" viewBox="0 0 10 6"><path d="M3.6,1.7 H8.6 L9.6,2.85 L8.6,4 H3.6 Z" fill="#b8b8b8" stroke="#6a6a6a" stroke-width="0.9"/><circle cx="1.9" cy="2.85" r="1.8" fill="#d8d8d8" stroke="#666" stroke-width="1.1"/></svg>
<div class="t" style="left:57.4px;top:85.28px;font-size:8.2px;line-height:9.159px;transform:scaleX(0.89);transform-origin:0 0;color:#1e1e1e">FK_Customer_Store_StoreID</div>
<svg class="a" style="left:31.1px;top:98.3px" width="6" height="6" viewBox="0 0 6 6"><path d="M1.5,0.6 L3.9,3 L1.5,5.4" stroke="#2283d8" stroke-width="1.45" fill="none"/></svg>
<svg class="a" style="left:42.9px;top:97.7px" width="10" height="6" viewBox="0 0 10 6"><path d="M0,2.5 H4.6" stroke="#2e2e2e" stroke-width="1.6"/><path d="M0.7,2.6 V4.2 M2.3,2.6 V4" stroke="#2e2e2e" stroke-width="1.1"/><circle cx="6.4" cy="2.5" r="1.75" fill="#888" stroke="#2e2e2e" stroke-width="1.2"/></svg>
<div class="t" style="left:57.4px;top:97.08px;font-size:8.2px;line-height:9.159px;transform:scaleX(0.89);transform-origin:0 0;color:#1e1e1e">PK_Customer_CustomerID</div>
<svg class="a" style="left:17.8px;top:110.1px" width="6" height="6" viewBox="0 0 6 6"><path d="M1.5,0.6 L3.9,3 L1.5,5.4" stroke="#2283d8" stroke-width="1.45" fill="none"/></svg>
<svg class="a" style="left:29.6px;top:107.5px" width="10" height="9" viewBox="0 0 10 9"><path d="M0,1.6 H3.2 L4,0 H9.1 V8.2 H0 Z" fill="#dcb878"/><rect x="4.2" y="0.2" width="4.7" height="1.2" fill="#e6c890"/></svg>
<div class="t" style="left:44.1px;top:108.88px;font-size:8.2px;line-height:9.159px;transform:scaleX(0.89);transform-origin:0 0;color:#1e1e1e">Constraints</div>
<svg class="a" style="left:17.8px;top:121.9px" width="6" height="6" viewBox="0 0 6 6"><path d="M1.5,0.6 L3.9,3 L1.5,5.4" stroke="#2283d8" stroke-width="1.45" fill="none"/></svg>
<svg class="a" style="left:29.6px;top:119.3px" width="10" height="9" viewBox="0 0 10 9"><path d="M0,1.6 H3.2 L4,0 H9.1 V8.2 H0 Z" fill="#dcb878"/><rect x="4.2" y="0.2" width="4.7" height="1.2" fill="#e6c890"/></svg>
<div class="t" style="left:44.1px;top:120.68px;font-size:8.2px;line-height:9.159px;transform:scaleX(0.89);transform-origin:0 0;color:#1e1e1e">Indexes</div>
<svg class="a" style="left:17.8px;top:133.7px" width="6" height="6" viewBox="0 0 6 6"><path d="M1.5,0.6 L3.9,3 L1.5,5.4" stroke="#2283d8" stroke-width="1.45" fill="none"/></svg>
<svg class="a" style="left:29.6px;top:131.1px" width="10" height="9" viewBox="0 0 10 9"><path d="M0,1.6 H3.2 L4,0 H9.1 V8.2 H0 Z" fill="#dcb878"/><rect x="4.2" y="0.2" width="4.7" height="1.2" fill="#e6c890"/></svg>
<div class="t" style="left:44.1px;top:132.48px;font-size:8.2px;line-height:9.159px;transform:scaleX(0.89);transform-origin:0 0;color:#1e1e1e">Statistics</div>
<svg class="a" style="left:17.8px;top:145.5px" width="6" height="6" viewBox="0 0 6 6"><path d="M1.5,0.6 L3.9,3 L1.5,5.4" stroke="#2283d8" stroke-width="1.45" fill="none"/></svg>
<svg class="a" style="left:29.6px;top:142.9px" width="10" height="9" viewBox="0 0 10 9"><path d="M0,1.6 H3.2 L4,0 H9.1 V8.2 H0 Z" fill="#dcb878"/><rect x="4.2" y="0.2" width="4.7" height="1.2" fill="#e6c890"/></svg>
<div class="t" style="left:44.1px;top:144.28px;font-size:8.2px;line-height:9.159px;transform:scaleX(0.89);transform-origin:0 0;color:#1e1e1e">Triggers</div>
<svg class="a" style="left:17.8px;top:157.3px" width="6" height="6" viewBox="0 0 6 6"><path d="M1.5,0.6 L3.9,3 L1.5,5.4" stroke="#2283d8" stroke-width="1.45" fill="none"/></svg>
<svg class="a" style="left:29.6px;top:154.7px" width="10" height="9" viewBox="0 0 10 9"><path d="M0,1.6 H3.2 L4,0 H9.1 V8.2 H0 Z" fill="#dcb878"/><rect x="4.2" y="0.2" width="4.7" height="1.2" fill="#e6c890"/></svg>
<div class="t" style="left:44.1px;top:156.08px;font-size:8.2px;line-height:9.159px;transform:scaleX(0.89);transform-origin:0 0;color:#1e1e1e">Depends On</div>
<svg class="a" style="left:17.8px;top:169.1px" width="6" height="6" viewBox="0 0 6 6"><path d="M1.5,0.6 L3.9,3 L1.5,5.4" stroke="#2283d8" stroke-width="1.45" fill="none"/></svg>
<svg class="a" style="left:29.6px;top:166.5px" width="10" height="9" viewBox="0 0 10 9"><path d="M0,1.6 H3.2 L4,0 H9.1 V8.2 H0 Z" fill="#dcb878"/><rect x="4.2" y="0.2" width="4.7" height="1.2" fill="#e6c890"/></svg>
<div class="t" style="left:44.1px;top:167.88px;font-size:8.2px;line-height:9.159px;transform:scaleX(0.89);transform-origin:0 0;color:#1e1e1e">Used By</div>
<svg class="a" style="left:4.5px;top:180.9px" width="6" height="6" viewBox="0 0 6 6"><path d="M1.5,0.6 L3.9,3 L1.5,5.4" stroke="#2283d8" stroke-width="1.45" fill="none"/></svg>
<svg class="a" style="left:16px;top:178px" width="10" height="9" viewBox="0 0 10 9"><rect x="0.5" y="0.5" width="9" height="8" rx="0.6" fill="#fff" stroke="#666" stroke-width="1"/><rect x="0" y="0.2" width="10" height="2" fill="#404040"/><path d="M0.5,4.5 H9.5 M0.5,6.5 H9.5 M3.5,2 V8.5 M6.5,2 V8.5" stroke="#777" stroke-width="1"/></svg>
<div class="t" style="left:30.8px;top:179.68px;font-size:8.2px;line-height:9.159px;transform:scaleX(0.89);transform-origin:0 0;color:#1e1e1e">Sales.PersonCreditCard</div>
<svg class="a" style="left:4.5px;top:192.7px" width="6" height="6" viewBox="0 0 6 6"><path d="M1.5,0.6 L3.9,3 L1.5,5.4" stroke="#2283d8" stroke-width="1.45" fill="none"/></svg>
<svg class="a" style="left:16px;top:190px" width="10" height="9" viewBox="0 0 10 9"><rect x="0.5" y="0.5" width="9" height="8" rx="0.6" fill="#fff" stroke="#666" stroke-width="1"/><rect x="0" y="0.2" width="10" height="2" fill="#404040"/><path d="M0.5,4.5 H9.5 M0.5,6.5 H9.5 M3.5,2 V8.5 M6.5,2 V8.5" stroke="#777" stroke-width="1"/></svg>
<div class="t" style="left:30.8px;top:191.48px;font-size:8.2px;line-height:9.159px;transform:scaleX(0.89);transform-origin:0 0;color:#1e1e1e">Sales.SalesOrderDetail</div>
<svg class="a" style="left:4.5px;top:204.5px" width="6" height="6" viewBox="0 0 6 6"><path d="M1.5,0.6 L3.9,3 L1.5,5.4" stroke="#2283d8" stroke-width="1.45" fill="none"/></svg>
<svg class="a" style="left:16px;top:202px" width="10" height="9" viewBox="0 0 10 9"><rect x="0.5" y="0.5" width="9" height="8" rx="0.6" fill="#fff" stroke="#666" stroke-width="1"/><rect x="0" y="0.2" width="10" height="2" fill="#404040"/><path d="M0.5,4.5 H9.5 M0.5,6.5 H9.5 M3.5,2 V8.5 M6.5,2 V8.5" stroke="#777" stroke-width="1"/></svg>
<div class="t" style="left:30.8px;top:203.28px;font-size:8.2px;line-height:9.159px;transform:scaleX(0.89);transform-origin:0 0;color:#1e1e1e">Sales.SalesOrderHeader</div>
<svg class="a" style="left:4.5px;top:216.3px" width="6" height="6" viewBox="0 0 6 6"><path d="M1.5,0.6 L3.9,3 L1.5,5.4" stroke="#2283d8" stroke-width="1.45" fill="none"/></svg>
<svg class="a" style="left:16px;top:214px" width="10" height="9" viewBox="0 0 10 9"><rect x="0.5" y="0.5" width="9" height="8" rx="0.6" fill="#fff" stroke="#666" stroke-width="1"/><rect x="0" y="0.2" width="10" height="2" fill="#404040"/><path d="M0.5,4.5 H9.5 M0.5,6.5 H9.5 M3.5,2 V8.5 M6.5,2 V8.5" stroke="#777" stroke-width="1"/></svg>
<div class="t" style="left:30.8px;top:215.08px;font-size:8.2px;line-height:9.159px;transform:scaleX(0.89);transform-origin:0 0;color:#1e1e1e">Sales.SalesOrderHeaderSalesReason</div>
<svg class="a" style="left:4.5px;top:228.1px" width="6" height="6" viewBox="0 0 6 6"><path d="M1.5,0.6 L3.9,3 L1.5,5.4" stroke="#2283d8" stroke-width="1.45" fill="none"/></svg>
<svg class="a" style="left:16px;top:226px" width="10" height="9" viewBox="0 0 10 9"><rect x="0.5" y="0.5" width="9" height="8" rx="0.6" fill="#fff" stroke="#666" stroke-width="1"/><rect x="0" y="0.2" width="10" height="2" fill="#404040"/><path d="M0.5,4.5 H9.5 M0.5,6.5 H9.5 M3.5,2 V8.5 M6.5,2 V8.5" stroke="#777" stroke-width="1"/></svg>
<div class="t" style="left:30.8px;top:226.88px;font-size:8.2px;line-height:9.159px;transform:scaleX(0.89);transform-origin:0 0;color:#1e1e1e">Sales.SalesPerson</div>
<svg class="a" style="left:4.5px;top:239.9px" width="6" height="6" viewBox="0 0 6 6"><path d="M1.5,0.6 L3.9,3 L1.5,5.4" stroke="#2283d8" stroke-width="1.45" fill="none"/></svg>
<svg class="a" style="left:16px;top:237px" width="10" height="9" viewBox="0 0 10 9"><rect x="0.5" y="0.5" width="9" height="8" rx="0.6" fill="#fff" stroke="#666" stroke-width="1"/><rect x="0" y="0.2" width="10" height="2" fill="#404040"/><path d="M0.5,4.5 H9.5 M0.5,6.5 H9.5 M3.5,2 V8.5 M6.5,2 V8.5" stroke="#777" stroke-width="1"/></svg>
<div class="t" style="left:30.8px;top:238.68px;font-size:8.2px;line-height:9.159px;transform:scaleX(0.89);transform-origin:0 0;color:#1e1e1e">Sales.SalesPersonQuotaHistory</div>
<svg class="a" style="left:4.5px;top:251.7px" width="6" height="6" viewBox="0 0 6 6"><path d="M1.5,0.6 L3.9,3 L1.5,5.4" stroke="#2283d8" stroke-width="1.45" fill="none"/></svg>
<svg class="a" style="left:16px;top:249px" width="10" height="9" viewBox="0 0 10 9"><rect x="0.5" y="0.5" width="9" height="8" rx="0.6" fill="#fff" stroke="#666" stroke-width="1"/><rect x="0" y="0.2" width="10" height="2" fill="#404040"/><path d="M0.5,4.5 H9.5 M0.5,6.5 H9.5 M3.5,2 V8.5 M6.5,2 V8.5" stroke="#777" stroke-width="1"/></svg>
<div class="t" style="left:30.8px;top:250.48px;font-size:8.2px;line-height:9.159px;transform:scaleX(0.89);transform-origin:0 0;color:#1e1e1e">Sales.SalesReason</div>
</div>
<div class="a" style="left:201px;top:120px;width:11px;height:268px;background:#f3f3f3"></div>
<svg class="a" style="left:203.5px;top:123.5px" width="6" height="5" viewBox="0 0 6 5"><polygon points="0.4,4.4 5.6,4.4 3,0.6" fill="#6e6e6e"/></svg>
<svg class="a" style="left:203.5px;top:367.8px" width="6" height="5" viewBox="0 0 6 5"><polygon points="0.4,0.6 5.6,0.6 3,4.4" fill="#6e6e6e"/></svg>
<div class="a" style="left:3px;top:376px;width:198px;height:12px;background:#f3f3f3"></div>
<div class="a" style="left:40px;top:376.5px;width:138px;height:11px;background:#dddde1"></div>
<svg class="a" style="left:6.8px;top:379.4px" width="5" height="6" viewBox="0 0 5 6"><polygon points="4.4,0.4 4.4,5.6 0.6,3" fill="#6e6e6e"/></svg>
<svg class="a" style="left:192.3px;top:379.4px" width="5" height="6" viewBox="0 0 5 6"><polygon points="0.6,0.4 0.6,5.6 4.4,3" fill="#6e6e6e"/></svg>
<svg class="a" style="left:11px;top:396px" width="12" height="12" viewBox="0 0 12 12"><rect x="1.6" y="1.3" width="6" height="9" fill="#fafafa"/><path d="M7.8,1.3 H1.6 V10.3 H7.8" stroke="#3a3a3a" stroke-width="1" fill="none"/><path d="M3.6,6 H7.8" stroke="#333" stroke-width="1.7"/><polygon points="7.2,3.6 11,6 7.2,8.4" fill="#333"/></svg>
<div class="t" style="left:24px;top:398.28px;font-size:8.2px;line-height:9.159px;transform:scaleX(0.96);transform-origin:0 0;color:#333">Output</div>
<div class="a" style="left:1px;top:409.3px;width:694px;height:19.7px;background:#f5f5f5"></div>
<div class="a" style="left:692px;top:420px;width:2px;height:2px;background:#dcdce3"></div>
<div class="a" style="left:689px;top:423px;width:2px;height:2px;background:#dcdce3"></div>
<div class="a" style="left:692px;top:423px;width:2px;height:2px;background:#dcdce3"></div>
<div class="a" style="left:686px;top:426px;width:2px;height:2px;background:#dcdce3"></div>
<div class="a" style="left:689px;top:426px;width:2px;height:2px;background:#dcdce3"></div>
<div class="a" style="left:692px;top:426px;width:2px;height:2px;background:#dcdce3"></div>
<div class="a" style="left:189.5px;top:177.5px;width:136px;height:125px;background:#fdfdfd;border:1px solid #cfcfcf;box-shadow:1px 1px 2px rgba(0,0,0,0.13)"></div>
<div class="a" style="left:191px;top:179.6px;width:133px;height:19px;background:#c8ddf4"></div>
<div class="a" style="left:212.5px;top:238px;width:111px;height:1px;background:#dadada"></div>
<div class="a" style="left:212.5px;top:260px;width:111px;height:1px;background:#dadada"></div>
<div class="a" style="left:212.5px;top:281.5px;width:111px;height:1px;background:#dadada"></div>
<svg class="a" style="left:195.6px;top:186.4px" width="11" height="6" viewBox="0 0 11 6"><path d="M3.6,1.7 H8.6 L9.6,2.85 L8.6,4 H3.6 Z" fill="#b8b8b8" stroke="#6a6a6a" stroke-width="0.9"/><circle cx="1.9" cy="2.85" r="1.8" fill="#d8d8d8" stroke="#666" stroke-width="1.1"/></svg>
<div class="t" style="left:215.1px;top:184.62px;font-size:8.6px;line-height:9.606px;transform:scaleX(0.93);transform-origin:0 0;color:#222">New <u>F</u>oreign Key...</div>
<svg class="a" style="left:196px;top:205.5px" width="10" height="6" viewBox="0 0 10 6"><path d="M0,2.5 H4.6" stroke="#2e2e2e" stroke-width="1.6"/><path d="M0.7,2.6 V4.2 M2.3,2.6 V4" stroke="#2e2e2e" stroke-width="1.1"/><circle cx="6.4" cy="2.5" r="1.75" fill="#fbfbfb" stroke="#2e2e2e" stroke-width="1.2"/></svg>
<div class="t" style="left:215.1px;top:203.92px;font-size:8.6px;line-height:9.606px;transform:scaleX(0.93);transform-origin:0 0;color:#222">New <u>P</u>rimary Key...</div>
<svg class="a" style="left:197.5px;top:222.5px" width="6" height="11" viewBox="0 0 6 11"><path d="M3,0.8 V5.6" stroke="#333" stroke-width="2.2" stroke-linecap="round"/><circle cx="3" cy="7.6" r="2.1" fill="#fbfbfb" stroke="#333" stroke-width="1.4"/></svg>
<div class="t" style="left:215.1px;top:223.02px;font-size:8.6px;line-height:9.606px;transform:scaleX(0.93);transform-origin:0 0;color:#222">New <u>U</u>nique Key...</div>
<svg class="a" style="left:196.5px;top:246px" width="7" height="7" viewBox="0 0 7 7"><path d="M0.2,0.3 H6.8 L4.3,3.4 V6.8 H2.7 V3.4 Z" fill="#333"/></svg>
<div class="t" style="left:215.2px;top:244.62px;font-size:8.6px;line-height:9.606px;transform:scaleX(0.93);transform-origin:0 0;color:#222">Filter...</div>
<svg class="a" style="left:194px;top:265px" width="12" height="12" viewBox="0 0 12 12"><path d="M5.6,1 H9.2 L10.8,2.6 V9.6 H5.6 Z" fill="#c8c8cc" stroke="#666" stroke-width="0.9"/><path d="M4,2.6 H7.6 L9.2,4.2 V10.6 H4 Z" fill="#e0e0e4" stroke="#666" stroke-width="0.9"/><circle cx="3.7" cy="8" r="3" fill="#fbfbfb" stroke="#3a3a3a" stroke-width="1.1"/><path d="M3.7,6.3 V8.2 H5.2" stroke="#333" stroke-width="0.9" fill="none"/></svg>
<div class="t" style="left:215.1px;top:266.32px;font-size:8.6px;line-height:9.606px;transform:scaleX(0.93);transform-origin:0 0;color:#222">Sho<u>w</u> Details</div>
<svg class="a" style="left:194.6px;top:287px" width="10" height="11" viewBox="0 0 10 11"><path d="M5.2,3 A3.4,3.4 0 1 0 8.3,5.2" stroke="#1a66b8" stroke-width="1.6" fill="none"/><polygon points="4.6,0.6 7.6,2.9 4.6,5.1" fill="#1a66b8"/></svg>
<div class="t" style="left:215.1px;top:287.72px;font-size:8.6px;line-height:9.606px;transform:scaleX(0.93);transform-origin:0 0;color:#222"><u>R</u>efresh</div>
<div class="t" style="left:299px;top:287.72px;font-size:8.6px;line-height:9.606px;transform:scaleX(0.93);transform-origin:0 0;color:#222">F5</div>
<svg class="a" style="left:296.5px;top:193px" width="11" height="16" viewBox="0 0 11 16"><path d="M0.8,0.8 V11.6 L3.3,9.3 L5.1,13.4 L6.9,12.6 L5.2,8.8 H8.4 Z" fill="#fff" stroke="#333" stroke-width="0.9" stroke-linejoin="round"/></svg>
</body></html>
